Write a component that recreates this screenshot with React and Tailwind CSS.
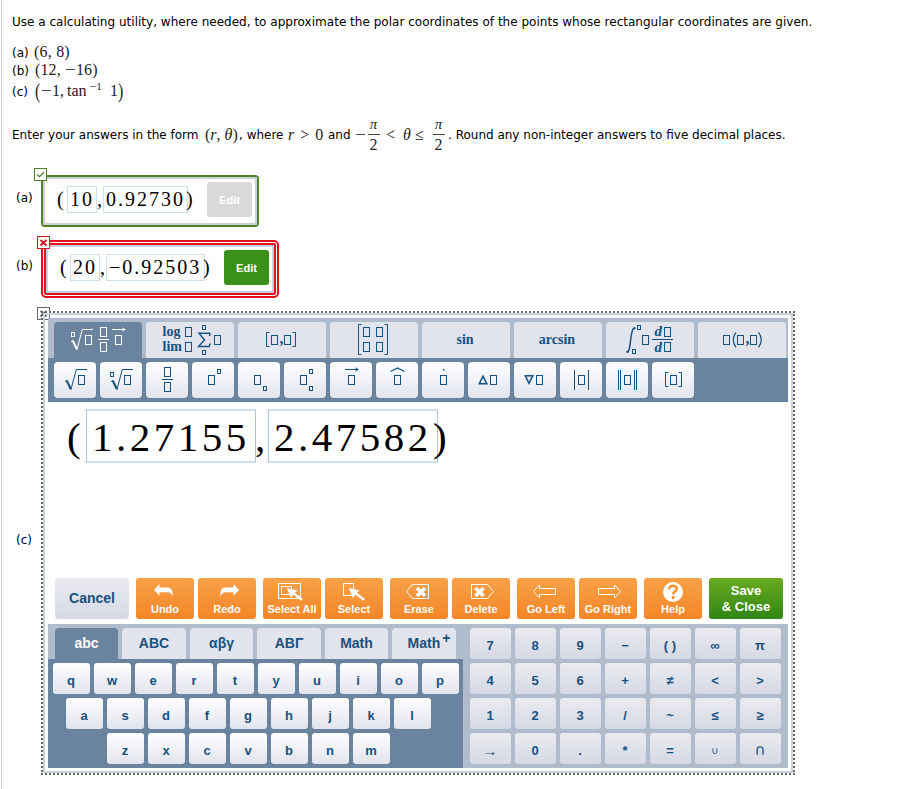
import clsx from "clsx";

const Box = ({ x, y = 13, w = 7, h = 10 }) => (
  <rect x={x + 0.5} y={y + 0.5} width={w - 1} height={h - 1} fill="none" stroke="currentColor" />
);

const MiniBox = ({ x, y }) => <Box x={x} y={y} w={4} h={5} />;

const Line = ({ d, w = 1 }) => <path d={d} fill="none" stroke="currentColor" strokeWidth={w} />;

const Radical = ({ x = 0 }) => (
  <g transform={`translate(${x} 0)`}>
    <Line d="M11 19.5l2-1" />
    <Line d="M12.7 18.5L16.7 27" w={2} />
    <Line d="M16.8 28L22.3 7.5H33" />
  </g>
);

const Brackets = ({ left, right, top = 10, bottom = 25 }) => (
  <Line
    d={`M${left + 3.5} ${top + 0.5}H${left + 0.5}V${bottom - 0.5}H${left + 3.5}M${right - 3.5} ${top + 0.5}H${right - 0.5}V${bottom - 0.5}H${right - 3.5}`}
  />
);

const Arrow = ({ x }) => (
  <g transform={`translate(${x} 0)`}>
    <Line d="M0 7.5H13" />
    <path d="M14 7.5l-4-2.3 1.2 2.3-1.2 2.3z" fill="currentColor" />
  </g>
);

const T = ({ x, y, size = 14, italic, anchor, children }) => (
  <text
    x={x}
    y={y}
    fontFamily="Liberation Serif, serif"
    fontWeight="bold"
    fontSize={size}
    fontStyle={italic ? "italic" : "normal"}
    textAnchor={anchor}
    fill="currentColor"
  >
    {children}
  </text>
);

const TABS = [
  <>
    <MiniBox x={17} y={10} />
    <Radical x={6} />
    <Box x={31} />
    <Box x={46} y={5} />
    <Line d="M44 17.5H55" />
    <Box x={46} y={20} />
    <Arrow x={58} />
    <Box x={61} />
  </>,
  <>
    <T x={16.5} y={14}>log</T>
    <Box x={39} y={5} />
    <T x={16.5} y={29}>lim</T>
    <Box x={39} y={20} />
    <MiniBox x={56} y={3} />
    <Line d="M63.8 14V11.2H53L58.5 18 52.5 24.5H63.3L64.3 21.5" w={1.4} />
    <MiniBox x={56} y={28} />
    <Box x={68} />
  </>,
  <>
    <Brackets left={28} right={58} />
    <Box x={33} />
    <T x={41.5} y={22} size={16}>,</T>
    <Box x={46} />
  </>,
  <>
    <Brackets left={28} right={58} top={2} bottom={33} />
    <Box x={33} y={5} />
    <Box x={46} y={5} />
    <Box x={33} y={20} />
    <Box x={46} y={20} />
  </>,
  <T x={43} y={22} anchor="middle">sin</T>,
  <T x={43} y={22} anchor="middle">arcsin</T>,
  <>
    <Line d="M21 30.3C25 31.5 24 5 28.8 6" w={1.5} />
    <circle cx="21.3" cy="29.8" r="1.1" fill="currentColor" />
    <circle cx="28.5" cy="6.3" r="1.1" fill="currentColor" />
    <MiniBox x={31} y={3} />
    <MiniBox x={26} y={27} />
    <Box x={36} />
    <T x={48.5} y={14} size={15} italic>d</T>
    <Box x={58} y={5} />
    <Line d="M46 17.5H67" />
    <T x={48.5} y={29.5} size={15} italic>d</T>
    <Box x={58} y={20} />
  </>,
  <>
    <Box x={25} />
    <Line d="M38 10.3Q32.5 17.5 38 25.3M60.5 10.3Q66 17.5 60.5 25.3" w={1.2} />
    <Box x={39} />
    <T x={47.5} y={22} size={16}>,</T>
    <Box x={52} />
  </>,
];

const TEMPLATES = [
  <><Radical /><Box x={24} /></>,
  <><MiniBox x={10} y={10} /><Radical /><Box x={24} /></>,
  <><Box x={18} y={5} /><Line d="M16 17.5H27" /><Box x={18} y={20} /></>,
  <><Box x={16} /><MiniBox x={25} y={7} /></>,
  <><Box x={16} /><MiniBox x={25} y={24} /></>,
  <><Box x={16} /><MiniBox x={25} y={7} /><MiniBox x={25} y={24} /></>,
  <><Arrow x={15} /><Box x={18} /></>,
  <><Line d="M14.5 9.5L21.5 6L28.5 9.5" w={1.3} /><Box x={18} /></>,
  <><rect x="21" y="7" width="1.5" height="1.5" fill="currentColor" /><Box x={18} /></>,
  <><Line d="M11.3 21.8H18.8L15 14.2Z" w={1.5} /><Box x={22} /></>,
  <><Line d="M11.3 13.7H18.8L15 21.3Z" w={1.5} /><Box x={22} /></>,
  <><Line d="M14.5 8V28M28.5 8V28" /><Box x={18} /></>,
  <><Line d="M12.5 8V28M14.5 8V28M28.5 8V28M30.5 8V28" /><Box x={18} /></>,
  <><Brackets left={13} right={30} /><Box x={18} /></>,
];

const Cursor = () => (
  <path d="M23.7 10L34.8 12.5 31.8 14.8 39.8 20.8 38.3 22.8 30.3 16.8 28 20Z" fill="#fff" />
);

const Cross = ({ x, y }) => <Line d={`M${x - 4} ${y - 4}l8 8m0-8l-8 8`} w={3.8} />;

const ACTIONS = [
  { label: "Undo", gap: "ml-[7px]", icon: <path d="M18 12L23.5 6V9.5H32Q37 9.5 36.7 18.5Q35.5 14.5 31.5 14.3H23.5V17.7Z" fill="#fff" /> },
  { label: "Redo", gap: "ml-1", icon: <path d="M41 12L35.5 6V9.5H27Q22 9.5 22.3 18.5Q23.5 14.5 27.5 14.3H35.5V17.7Z" fill="#fff" /> },
  { label: "Select All", gap: "ml-[7px]", icon: <><Box x={15} y={5} w={23} h={16} /><Box x={18} y={8} w={11} h={9} /><Cursor /></> },
  { label: "Select", gap: "ml-1", icon: <><Box x={18} y={5} w={11} h={13} /><Cursor /></> },
  { label: "Erase", gap: "ml-[7px]", icon: <><Line d="M16.5 13.5L22.5 6.5H38.5V20.5H22.5Z" /><Cross x={31} y={14} /></> },
  { label: "Delete", gap: "ml-1", icon: <><Line d="M41.5 13.5L35.5 6.5H19.5V20.5H35.5Z" /><Cross x={27.5} y={14} /></> },
  { label: "Go Left", gap: "ml-[7px]", icon: <Line d="M16.5 13.5L22.5 7V10.5H38.5V16.5H22.5V20Z" /> },
  { label: "Go Right", gap: "ml-1", icon: <Line d="M41.5 13.5L35.5 7V10.5H19.5V16.5H35.5V20Z" /> },
  {
    label: "Help",
    gap: "ml-[7px]",
    icon: (
      <>
        <circle cx="29" cy="14" r="10" fill="#fff" />
        <path d="M25.2 11.3Q25.4 7.7 29.1 7.7Q32.8 7.8 32.8 10.8Q32.8 12.4 30.8 13.6Q29.2 14.5 29.2 16.5" fill="none" stroke="#f79438" strokeWidth="2.6" />
        <rect x="27.7" y="18" width="3" height="3" fill="#f79438" />
      </>
    ),
  },
];

const KEY_TABS = [
  { label: "abc", width: "w-[63px]", active: true },
  { label: "ABC", width: "w-16" },
  { label: "αβγ", width: "w-[63px]" },
  { label: "ΑΒΓ", width: "w-16" },
  { label: "Math", width: "w-[63px]" },
  { label: "Math", width: "w-16", plus: true },
];

const LETTERS = [
  { keys: "qwertyuiop", indent: "pl-[5px]" },
  { keys: "asdfghjkl", indent: "pl-[18px]" },
  { keys: "zxcvbnm", indent: "pl-[59px]" },
];

const PAD = [
  "7", "8", "9", "−", "( )", "∞", "π",
  "4", "5", "6", "+", "≠", "<", ">",
  "1", "2", "3", "/", "~", "≤", "≥",
  "→", "0", ".", "*", "=", "∪", "∩",
];

const PAD_STYLE = {
  "→": "font-['Liberation_Sans'] font-normal text-[15px]",
  "∪": "font-['DejaVu_Sans'] font-normal text-[10px]",
  "∩": "font-['DejaVu_Sans'] font-normal text-[15px]",
};

const Math = ({ className, size = "text-[16px]", children }) => (
  <span className={clsx("inline-block whitespace-pre font-['Liberation_Serif',serif] text-[#222]", size, className)}>
    {children}
  </span>
);

const WideMinus = ({ className }) => <span className={clsx("inline-block origin-left scale-x-120", className)}>−</span>;

const HalfPi = () => (
  <span className="-mt-[2px] flex w-[11px] flex-col items-center font-['Liberation_Serif',serif] leading-none text-[#222]">
    <span className="h-[15px] text-[15px] italic leading-[10px]">π</span>
    <span className="h-px w-3 bg-[#444]" />
    <span className="h-[15px] text-[16px] leading-[20px]">2</span>
  </span>
);

const Slot = ({ className, children }) => (
  <span className={clsx("shrink-0 whitespace-nowrap border border-[#cfdfeb]", className)}>{children}</span>
);

const Badge = ({ className, children }) => (
  <span className={clsx("absolute h-[13px] w-[13px] border bg-white", className)}>
    <svg viewBox="0 0 11 11" className="block h-[11px] w-[11px]">{children}</svg>
  </span>
);

const Answer = ({ first, second, secondWidth, edit, editGap }) => (
  <div className="flex font-['Liberation_Serif',serif] text-[20px] leading-[27px] tracking-[2px] text-black">
    <span className="w-[10px]">(</span>
    <Slot className="h-[27px] w-[30px] pl-[2px] leading-[25px]">{first}</Slot>
    <span className="w-[6px] leading-[27px]">,</span>
    <Slot className={clsx("h-[27px] pl-[2px] leading-[25px]", secondWidth)}>{second}</Slot>
    <span className="w-[6px] -ml-[2px] mr-px">)</span>
    <button
      className={clsx(
        "-mt-1 h-[35px] w-[45px] rounded-[3px] pt-px font-['Liberation_Sans',sans-serif] text-[11px] font-bold tracking-normal text-white",
        edit,
        editGap
      )}
    >
      Edit
    </button>
  </div>
);

const App = () => (
  <div className="ml-px h-[789px] overflow-hidden border-l border-[#c9d3dd] bg-white pl-[10px] font-['DejaVu_Sans',Verdana,sans-serif] text-[12px] text-black">
    <p className="mt-[14px] h-4 whitespace-nowrap leading-4 tracking-[0.017px]">
      Use a calculating utility, where needed, to approximate the polar coordinates of the points whose rectangular coordinates are given.
    </p>
    <div className="mt-[13px] h-[57px] whitespace-pre">
      <div className="h-[18px] leading-[18px]">
        <span className="inline-block w-[22px]">(a)</span>
        <Math className="tracking-[0.2px]">(6, 8)</Math>
      </div>
      <div className="h-[18px] leading-[18px]">
        <span className="inline-block w-[23px]">(b)</span>
        <Math className="tracking-[0.1px]">(12, <WideMinus className="mr-[2px]" />16)</Math>
      </div>
      <div className="flex h-[22px] leading-[26px]">
        <span className="w-[23px]">(c)</span>
        <Math className="w-[6px] origin-center scale-y-125 leading-[23px]">(</Math>
        <Math className="w-[48px] leading-[23px]"><WideMinus className="mr-[2px]" />1,<span className="ml-[3px]">tan</span></Math>
        <Math size="text-[11px]" className="w-[21px] leading-[15px]"><WideMinus className="mr-px" />1</Math>
        <Math className="w-[8px] leading-[23px]">1</Math>
        <Math className="origin-center scale-y-125 leading-[23px]">)</Math>
      </div>
    </div>

    <div className="mt-[19px] flex h-8 items-center whitespace-pre leading-8">
      <span className="w-[193px]">Enter your answers in the form</span>
      <Math className="w-[34px]">(<i>r</i>, <i>θ</i>)</Math>
      <span className="w-[49px]">, where</span>
      <Math className="w-10"><i>r</i> <span className="ml-[2px] mr-[2px]">&gt;</span> 0</Math>
      <span className="w-[27px]">and</span>
      <Math className="w-[13px]"><WideMinus /></Math>
      <HalfPi />
      <Math className="ml-[7px] w-[17px]">&lt;</Math>
      <Math className="w-[12px] italic">θ</Math>
      <Math className="w-[18px]">≤</Math>
      <HalfPi />
      <span className="pl-1">. Round any non-integer answers to five decimal places.</span>
    </div>

    <div className="mt-[24px] flex items-start">
      <span className="w-[29px] pl-1 pt-[15px] leading-4">(a)</span>
      <div className="relative h-[52px] w-[218px] rounded-[4px] border-2 border-[#4f8220] bg-white">
        <div className="h-full border-2 border-[#c8d1dc] pl-3 pt-[7px]">
          <Answer first="10" second="0.92730" secondWidth="w-[85px]" edit="bg-[#d9d9d9]" editGap="ml-[14px]" />
        </div>
        <Badge className="-left-[9px] -top-[9px] border-[#4f8220]">
          <path d="M2 5.5L4.5 7.7L9 3.3" fill="none" stroke="#4f8220" strokeWidth="1.3" />
        </Badge>
      </div>
    </div>

    <div className="mt-[13px] flex items-start">
      <span className="w-[29px] pl-1 pt-[18px] leading-4">(b)</span>
      <div className="relative h-[58px] w-[238px] rounded-[5px] border-[5px] border-double border-[#e3101c] bg-white">
        <div className="h-full border-2 border-[#c8d1dc] pl-3 pt-[7px]">
          <Answer first="20" second="−0.92503" secondWidth="w-[99px]" edit="bg-[#3a9018]" editGap="ml-[14px]" />
        </div>
        <Badge className="-left-[9px] -top-[9px] border-[#e3101c]">
          <path d="M2.5 3L8.5 8.5M8.5 3L2.5 8.5" fill="none" stroke="#d3101c" strokeWidth="1.8" />
        </Badge>
      </div>
    </div>

    <div className="mt-[13px] flex items-start">
      <span className="w-[29px] pl-1 pt-[221px] leading-4">(c)</span>
      <div className="relative h-[464px] w-[754px]">
        <Badge className="-left-1 -top-1 border-[#666]">
          <path d="M2.5 3L8.5 8.5M8.5 3L2.5 8.5" fill="none" stroke="#666" strokeWidth="1.8" />
        </Badge>
        <div className="relative h-full border-2 border-dotted border-[#666]">
          <div className="flex h-full flex-col border-2 border-[#c8d1dc] p-[3px]">
            {/* template tabs */}
            <div className="flex h-10 shrink-0 gap-1 bg-[#b0bccb] pl-[6px] pt-1">
              {TABS.map((icon, i) => (
                <div
                  key={i}
                  className={clsx("h-9 w-[88px] rounded-t-[4px]", i === 0 ? "bg-[#6a839e] text-white" : "bg-[#e1e4ed] text-[#17517f]")}
                >
                  <svg viewBox="0 0 88 36" className="block h-9 w-[88px]">{icon}</svg>
                </div>
              ))}
            </div>
            <div className="flex h-11 shrink-0 gap-1 bg-[#6a839e] pl-[6px] pt-1 text-[#17517f]">
              {TEMPLATES.map((icon, i) => (
                <div key={i} className="h-9 w-[42px] rounded-[4px] bg-gradient-to-b from-white to-[#e1e5ee]">
                  <svg viewBox="0 0 42 36" className="block h-9 w-[42px]">{icon}</svg>
                </div>
              ))}
            </div>

            {/* expression */}
            <div className="flex h-44 shrink-0 pl-[18px] pt-[7px] font-['Liberation_Serif',serif] text-[41px] leading-[56px] tracking-[3.5px]">
              <span className="w-5 pl-px">(</span>
              <Slot className="h-[54px] w-[170px] border-x-[#a9c3d8] border-y-2 pl-[5px] leading-[52px]">1.27155</Slot>
              <span className="w-3 -indent-px">,</span>
              <Slot className="h-[54px] w-[170px] border-x-[#a9c3d8] border-y-2 pl-[5px] leading-[52px]">2.47582</Slot>
              <span className="-ml-[5px]">)</span>
            </div>

            {/* actions */}
            <div className="flex h-[46px] shrink-0 pl-[7px] font-['Liberation_Sans',sans-serif] font-bold text-white">
              <button className="h-[41px] w-[74px] rounded-[4px] bg-gradient-to-b from-[#e9eaf0] to-[#d6dae6] text-[14px] text-[#17517f]">
                Cancel
              </button>
              {ACTIONS.map(({ label, gap, icon }) => (
                <button key={label} className={clsx("h-[41px] w-[58px] rounded-[3px] bg-gradient-to-b from-[#f7a146] to-[#f68527]", gap)}>
                  <svg viewBox="0 0 58 25" className="block h-[25px] w-[58px]">{icon}</svg>
                  <span className="block h-4 whitespace-nowrap text-[11px] leading-[13px]">{label}</span>
                </button>
              ))}
              <button className="ml-[7px] h-[41px] w-[74px] rounded-[3px] bg-gradient-to-b from-[#68ab20] to-[#2f8515] text-[13px] leading-4">
                Save<br />&amp; Close
              </button>
            </div>

            {/* keyboard */}
            <div className="flex h-36 shrink-0 bg-[#b0bccb] font-['Liberation_Sans','DejaVu_Sans',sans-serif] text-[14px] font-bold text-[#17517f]">
              <div className="w-[415px]">
                <div className="flex h-[35px] gap-1 pl-[7px] pt-1">
                  {KEY_TABS.map(({ label, width, active, plus }, i) => (
                    <div
                      key={i}
                      className={clsx("rounded-t-[4px] text-center leading-[31px]", width, active ? "bg-[#6a839e] text-white" : "bg-[#e1e4ed]")}
                    >
                      {label}
                      {plus && <span className="relative -top-[5px] -mr-[10px] pl-[2px] leading-none">+</span>}
                    </div>
                  ))}
                </div>
                <div className="flex h-[109px] flex-col gap-1 bg-[#6a839e] pt-1">
                  {LETTERS.map(({ keys, indent }) => (
                    <div key={keys} className={clsx("flex gap-1", indent)}>
                      {keys.split("").map(k => (
                        <div key={k} className="h-[31px] w-[37px] rounded-[3px] bg-gradient-to-b from-white to-[#e1e4ed] pr-px text-center text-[13px] leading-[35px]">
                          {k}
                        </div>
                      ))}
                    </div>
                  ))}
                </div>
              </div>
              <div className="grid grid-cols-[repeat(7,41px)] content-start gap-1 pl-[7px] pt-1">
                {PAD.map(k => (
                  <div
                    key={k}
                    className={clsx(
                      "h-[31px] rounded-[3px] bg-gradient-to-b from-[#eaebef] to-[#d5d9e5] pr-px text-center leading-[35px]",
                      PAD_STYLE[k] || "text-[13px]"
                    )}
                  >
                    {k}
                  </div>
                ))}
              </div>
            </div>
          </div>
        </div>
      </div>
    </div>
  </div>
);

export default App;
